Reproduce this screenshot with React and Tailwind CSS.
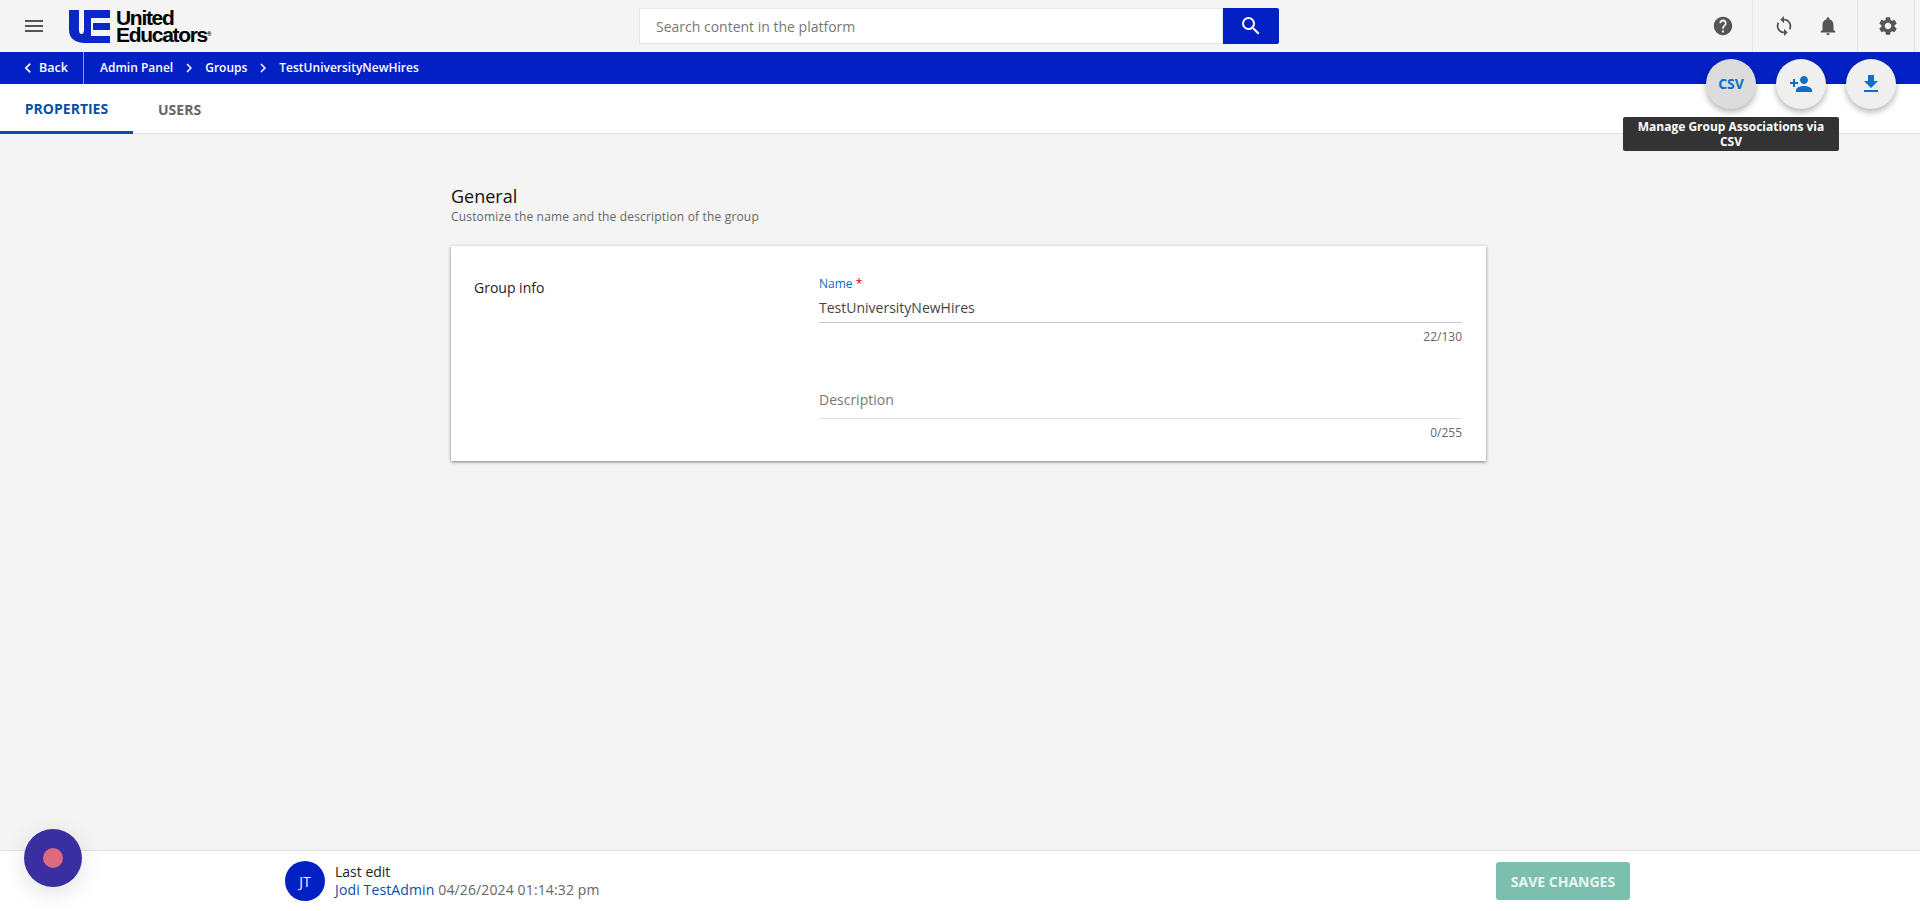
import { MdMenu, MdSearch, MdHelp, MdSync, MdNotifications, MdSettings, MdPersonAdd, MdFileDownload, MdChevronLeft, MdChevronRight } from "react-icons/md";

// UE mark from the logo
const LogoMark = () => (
    <svg width="41" height="33" viewBox="0 0 41 33" className="shrink-0">
        <path d="M0 0h10v20c0 2.5 1 4 2.5 4s2.5-1.5 2.5-4V0h26v8H22v18h19v7H16C6 33 0 28 0 20z" fill="#0a28c8" />
        <path d="M24 13h17v7H24z" fill="#0a28c8" />
    </svg>
);

const Breadcrumb = ({ children, last }) => (
    <>
        <span className="text-[12px] font-semibold text-white whitespace-nowrap">{children}</span>
        {!last && <MdChevronRight className="mx-[7px] text-white text-[18px]" />}
    </>
);

const Fab = ({ children, active }) => (
    <button className={`w-[50px] h-[50px] rounded-full flex items-center justify-center text-[#0f6fc6] shadow-[0_3px_6px_rgba(0,0,0,0.3)] ${active ? "bg-[#dcdcdc]" : "bg-[#efefef]"}`}>
        {children}
    </button>
);

const App = () => {
    return (
        <div className="relative h-screen flex flex-col bg-[#f4f4f4] overflow-hidden font-['Open_Sans',sans-serif]">
            {/* top bar */}
            <header className="h-[52px] flex items-center relative shrink-0">
                <MdMenu className="ml-[22px] text-[24px] text-[#555]" />
                <div className="ml-[23px] w-[150px] flex items-center gap-[6px]">
                    <LogoMark />
                    <div className="font-['Liberation_Sans',sans-serif] font-bold text-black text-[21px] leading-[17px] tracking-[-1.3px]">
                        <div>United</div>
                        <div>Educators<span className="text-[6px] align-top">®</span></div>
                    </div>
                </div>
                <div className="ml-[420px] flex w-[640px] h-[36px]">
                    <div className="flex-1 bg-white border border-[#e6e6e6] flex items-center pl-[16px] text-[14px] text-[#777]">
                        Search content in the platform
                    </div>
                    <button className="w-[56px] bg-[#0320c4] rounded-r-[2px] flex items-center justify-center">
                        <MdSearch className="text-white text-[24px]" />
                    </button>
                </div>
                <div className="ml-auto flex items-center h-full text-[#555]">
                    <div className="w-[65px] h-full flex items-center justify-center border-r border-[#e4e4e4] pl-[6px]">
                        <MdHelp className="text-[22px]" />
                    </div>
                    <div className="w-[105px] h-full flex items-center border-r border-[#e4e4e4] pl-[20px] gap-[22px]">
                        <MdSync className="text-[22px]" />
                        <MdNotifications className="text-[22px]" />
                    </div>
                    <div className="w-[57px] h-full flex items-center justify-center border-r border-[#e4e4e4] pl-[4px]">
                        <MdSettings className="text-[22px]" />
                    </div>
                    <div className="w-[5px]" />
                </div>
            </header>

            {/* breadcrumb strip */}
            <nav className="h-[32px] bg-[#0320c4] flex items-center shrink-0">
                <div className="w-[84px] h-full flex items-center border-r border-[#8f9ce4] pl-[19px]">
                    <MdChevronLeft className="text-white text-[20px] -ml-[1px]" />
                    <span className="text-[12.5px] font-semibold text-white ml-[1px]">Back</span>
                </div>
                <div className="flex items-center pl-[16px]">
                    <Breadcrumb>Admin Panel</Breadcrumb>
                    <Breadcrumb>Groups</Breadcrumb>
                    <Breadcrumb last>TestUniversityNewHires</Breadcrumb>
                </div>
            </nav>

            {/* tabs */}
            <div className="h-[50px] bg-white border-b border-[#e0e0e0] flex shrink-0">
                <div className="w-[133px] h-[50px] border-b-[3px] border-[#0b4ea2] flex items-center justify-center text-[14px] font-bold text-[#0b4ea2] pt-[1px]">
                    PROPERTIES
                </div>
                <div className="ml-[25px] h-[49px] flex items-center text-[14px] font-bold text-[#666] pt-[1px]">USERS</div>
            </div>

            {/* content */}
            <main className="flex-1 pl-[451px] pt-[50px]">
                <h2 className="text-[18px] leading-[24px] text-[#111]">General</h2>
                <p className="text-[12px] leading-[16px] text-[#666] mt-[1px] tracking-[0.17px]">Customize the name and the description of the group</p>
                <section className="mt-[21px] w-[1035px] h-[215px] bg-white shadow-[0_1px_3px_rgba(0,0,0,0.5)] flex pl-[23px] pr-[24px] pt-[30px]">
                    <div className="w-[345px] text-[14px] font-medium leading-[20px] text-[#222] pt-[2px]">Group info</div>
                    <div className="flex-1">
                        <label className="block text-[12px] leading-[16px] font-medium text-[#0f6cb8]">
                            Name <span className="text-[#d0021b]">*</span>
                        </label>
                        <div className="mt-[6px] h-[25px] leading-[20px] text-[14px] text-[#444] border-b border-[#c8c8c8]">TestUniversityNewHires</div>
                        <div className="mt-[6px] text-right text-[12px] leading-[16px] text-[#666]">22/130</div>
                        <div className="mt-[45px] h-[29px] leading-[20px] text-[14px] text-[#777] border-b border-[#e2e2e2]">Description</div>
                        <div className="mt-[6px] text-right text-[12px] leading-[16px] text-[#666]">0/255</div>
                    </div>
                </section>
            </main>

            {/* footer */}
            <footer className="h-[61px] bg-white border-t border-[#e2e2e2] flex items-center pl-[285px] pr-[290px] shrink-0">
                <div className="w-[40px] h-[40px] rounded-full bg-[#0320c4] flex items-center justify-center text-[14px] text-white">JT</div>
                <div className="ml-[10px]">
                    <div className="text-[14px] leading-[18px] text-[#222]">Last edit</div>
                    <div className="text-[14px] leading-[18px] text-[#666] tracking-[0.13px]">
                        <span className="text-[#0b4ea2]">Jodi TestAdmin</span> 04/26/2024 01:14:32 pm
                    </div>
                </div>
                <button className="ml-auto w-[134px] h-[38px] rounded-[3px] bg-[#7dbfae] text-[14px] font-bold text-[#e8f5f1]">SAVE CHANGES</button>
            </footer>

            {/* floating action buttons */}
            <div className="absolute top-[59px] right-[24px] flex gap-[20px]">
                <Fab active><span className="text-[14px] font-bold -mt-[2px]">CSV</span></Fab>
                <Fab><MdPersonAdd className="text-[24px]" /></Fab>
                <Fab><MdFileDownload className="text-[24px]" /></Fab>
            </div>
            <div className="absolute top-[117px] left-[1623px] w-[216px] h-[34px] bg-[#333] rounded-[2px] text-center text-[12px] leading-[15px] font-bold text-white pt-[2px] px-[14px]">
                Manage Group Associations via CSV
            </div>

            {/* recorder bubble */}
            <div className="absolute left-[24px] top-[829px] w-[58px] h-[58px] rounded-full bg-[#3a2fa0] flex items-center justify-center shadow-[0_6px_24px_rgba(0,0,0,0.12)]">
                <div className="w-[20px] h-[20px] rounded-full bg-[#df6a7e]" />
            </div>
        </div>
    );
};

export default App;
